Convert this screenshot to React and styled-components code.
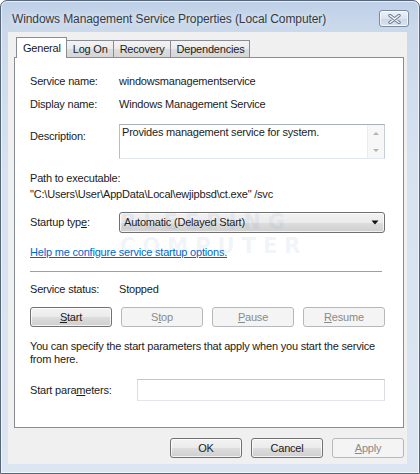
import React from "react";
import styled, { createGlobalStyle } from "styled-components";

const GlobalStyle = createGlobalStyle`
  html, body { margin: 0; padding: 0; background: #ffffff; }
  body {
    font-family: "Liberation Sans", Arial, sans-serif;
    font-size: 11px;
    letter-spacing: -0.2px;
    color: #1b1b1b;
  }
`;

const Window = styled.div`
  box-sizing: border-box;
  width: 420px;
  height: 474px;
  border: 1px solid #56667c;
  border-radius: 7px 7px 0 0;
  background: linear-gradient(to bottom, #bfd0e7 0px, #cbd9eb 30px, #d6e2f0 160px, #dce6f3 100%);
  box-shadow: inset 0 0 0 1px rgba(255, 255, 255, 0.6);
  display: flex;
  flex-direction: column;
`;

const TitleBar = styled.div`
  height: 31px;
  flex: none;
  display: flex;
  justify-content: space-between;
  align-items: flex-start;
  padding: 0 10px 0 11px;
`;

const Title = styled.div`
  margin-top: 11px;
  font-size: 12px;
  letter-spacing: -0.1px;
  color: #353b45;
  text-shadow: 0 0 6px rgba(255, 255, 255, 0.9);
  white-space: nowrap;
`;

const CloseButton = styled.div`
  margin-top: 9px;
  width: 30px;
  height: 17px;
  box-sizing: border-box;
  border: 1px solid #7b8ba2;
  border-radius: 3px;
  background: linear-gradient(to bottom, #eef2f8 0%, #dbe4f0 50%, #cbd7e7 51%, #d9e3f0 100%);
  box-shadow: inset 0 0 0 1px rgba(255, 255, 255, 0.7);
  display: flex;
  align-items: center;
  justify-content: center;
`;

const Client = styled.div`
  flex: 1;
  margin: 0 12px 9px 7px;
  padding: 5px 3px 0 6px;
  background: #f0f0f0;
  display: flex;
  flex-direction: column;
`;

const TabStrip = styled.div`
  display: flex;
  align-items: flex-end;
  height: 21px;
  padding-left: 2px;
  margin-bottom: -1px;
`;

const Tab = styled.div`
  position: relative;
  box-sizing: border-box;
  height: ${({ $active }) => ($active ? "21px" : "17px")};
  margin-bottom: ${({ $active }) => ($active ? "0" : "1px")};
  margin-left: ${({ $first }) => ($first ? "0" : "-1px")};
  padding: ${({ $active }) => ($active ? "3px 5px 0 6px" : "1px 5px 0 6px")};
  border: 1px solid #898c95;
  border-bottom: none;
  background: ${({ $active }) =>
    $active ? "#ffffff" : "linear-gradient(to bottom, #f3f3f3 0%, #ebebeb 50%, #dddddd 51%, #d6d6d6 100%)"};
  z-index: ${({ $active }) => ($active ? 2 : 1)};
  line-height: 14px;
  white-space: nowrap;
`;

const Panel = styled.div`
  position: relative;
  box-sizing: border-box;
  height: 371px;
  flex: none;
  background: #ffffff;
  border: 1px solid #898c95;
  padding: 16px 18px 0 15px;
`;

const Field = styled.div`
  display: flex;
  align-items: ${({ $top }) => ($top ? "flex-start" : "center")};
  margin-top: ${({ $mt }) => $mt || 0}px;
  line-height: 15px;
`;

const Label = styled.div`
  flex: none;
  width: ${({ $w }) => $w || 89}px;
  margin-top: ${({ $mt }) => $mt || 0}px;
  white-space: nowrap;
`;

const Value = styled.div`
  white-space: nowrap;
`;

const DescBox = styled.div`
  position: relative;
  box-sizing: border-box;
  width: 267px;
  height: 35px;
  border: 1px solid;
  border-color: #a9aeb6 #c9ced6 #e3e7ee #b8bdc6;
  padding: 1px 0 0 2px;
  line-height: 13px;
  display: flex;
  justify-content: space-between;
`;

const ScrollBar = styled.div`
  width: 16px;
  margin-top: -1px;
  border-left: 1px solid #ececec;
  background: #f7f7f7;
  display: flex;
  flex-direction: column;
  align-items: center;
  justify-content: space-between;
  padding: 7px 0 6px;
`;

const Arrow = styled.div`
  width: 0;
  height: 0;
  border-left: 3px solid transparent;
  border-right: 3px solid transparent;
  border-${({ $up }) => ($up ? "bottom" : "top")}: 3px solid ${({ $color }) => $color || "#b4b4b4"};
`;

const PathBlock = styled.div`
  margin-top: 11px;
  line-height: 16px;
  white-space: nowrap;
`;

const Combo = styled.div`
  box-sizing: border-box;
  width: 267px;
  height: 21px;
  border: 1px solid #707070;
  border-radius: 3px;
  background: linear-gradient(to bottom, #f2f2f2 0%, #ebebeb 50%, #dddddd 51%, #cfcfcf 100%);
  box-shadow: inset 0 0 0 1px rgba(255, 255, 255, 0.7);
  display: flex;
  align-items: center;
  justify-content: space-between;
  padding: 0 5px 0 4px;
`;

const HelpLink = styled.a`
  display: inline-block;
  margin-top: 12px;
  line-height: 15px;
  color: #0066cc;
  text-decoration: underline;
  cursor: pointer;
`;

const Separator = styled.div`
  height: 1px;
  margin: 11px 3px 0 0;
  background: #a0a0a0;
`;

const ButtonRow = styled.div`
  display: flex;
  gap: 9px;
  margin-top: 10px;
`;

const Button = styled.button`
  box-sizing: border-box;
  flex: ${({ $w }) => ($w ? "none" : "1")};
  width: ${({ $w }) => ($w ? `${$w}px` : "auto")};
  height: 20px;
  padding: 0;
  font: inherit;
  letter-spacing: inherit;
  color: #1b1b1b;
  border: 1px solid #707070;
  border-radius: 3px;
  background: linear-gradient(to bottom, #f2f2f2 0%, #ebebeb 50%, #dddddd 51%, #cfcfcf 100%);
  box-shadow: inset 0 0 0 1px rgba(255, 255, 255, 0.75);

  &:disabled {
    color: #8a8a8a;
    border-color: #b5b9bc;
    background: #f4f4f4;
    box-shadow: none;
  }
`;

const Note = styled.div`
  margin-top: 13px;
  line-height: 13px;
`;

const TextInput = styled.div`
  box-sizing: border-box;
  width: 249px;
  height: 22px;
  border: 1px solid;
  border-color: #c2c6cc #dadde2 #e3e6ea #dadde2;
  background: #ffffff;
`;

const Watermark = styled.div`
  position: absolute;
  left: 105px;
  top: 152px;
  font-family: "DejaVu Sans", sans-serif;
  font-weight: bold;
  font-size: 21px;
  line-height: 24px;
  letter-spacing: 7px;
  color: rgba(110, 150, 200, 0.11);
  pointer-events: none;
  z-index: 3;
`;

const Footer = styled.div`
  display: flex;
  justify-content: flex-end;
  gap: 9px;
  margin-top: 10px;
`;

const tabs = ["General", "Log On", "Recovery", "Dependencies"];

export default function App() {
  return (
    <>
      <GlobalStyle />
      <Window>
        <TitleBar>
          <Title>Windows Management Service Properties (Local Computer)</Title>
          <CloseButton>
            <svg width="13" height="10" viewBox="0 0 13 10">
              <path d="M2 1.5 L11 8.5 M11 1.5 L2 8.5" stroke="#6b7a8f" strokeWidth="3.4" strokeLinecap="round" />
              <path d="M2 1.5 L11 8.5 M11 1.5 L2 8.5" stroke="#f4f6fa" strokeWidth="1.5" strokeLinecap="round" />
            </svg>
          </CloseButton>
        </TitleBar>
        <Client>
          <TabStrip>
            {tabs.map((t, i) => (
              <Tab key={t} $active={i === 0} $first={i === 0}>
                {t}
              </Tab>
            ))}
          </TabStrip>
          <Panel>
            <Field>
              <Label>Service name:</Label>
              <Value>windowsmanagementservice</Value>
            </Field>
            <Field $mt={8}>
              <Label>Display name:</Label>
              <Value>Windows Management Service</Value>
            </Field>
            <Field $top $mt={12}>
              <Label $mt={5}>Description:</Label>
              <DescBox>
                <span>Provides management service for system.</span>
                <ScrollBar>
                  <Arrow $up />
                  <Arrow />
                </ScrollBar>
              </DescBox>
            </Field>
            <PathBlock>
              <div>Path to executable:</div>
              <div>"C:\Users\User\AppData\Local\ewjipbsd\ct.exe" /svc</div>
            </PathBlock>
            <Field $mt={10}>
              <Label>
                Startup typ<u>e</u>:
              </Label>
              <Combo>
                <span>Automatic (Delayed Start)</span>
                <svg width="8" height="5" viewBox="0 0 8 5">
                  <path d="M0.5 0.5 H7.5 L4 4.5 Z" fill="#111" />
                </svg>
              </Combo>
            </Field>
            <HelpLink>Help me configure service startup options.</HelpLink>
            <Separator />
            <Field $mt={10}>
              <Label>Service status:</Label>
              <Value>Stopped</Value>
            </Field>
            <ButtonRow>
              <Button>
                <u>S</u>tart
              </Button>
              <Button disabled>
                S<u>t</u>op
              </Button>
              <Button disabled>
                <u>P</u>ause
              </Button>
              <Button disabled>
                <u>R</u>esume
              </Button>
            </ButtonRow>
            <Note>
              You can specify the start parameters that apply when you start the service
              <br />
              from here.
            </Note>
            <Field $mt={13}>
              <Label $w={107}>
                Start para<u>m</u>eters:
              </Label>
              <TextInput />
            </Field>
            <Watermark>
              BLEEPING
              <br />
              COMPUTER
            </Watermark>
          </Panel>
          <Footer>
            <Button $w={72}>OK</Button>
            <Button $w={72}>Cancel</Button>
            <Button $w={72} disabled>
              <u>A</u>pply
            </Button>
          </Footer>
        </Client>
      </Window>
    </>
  );
}
